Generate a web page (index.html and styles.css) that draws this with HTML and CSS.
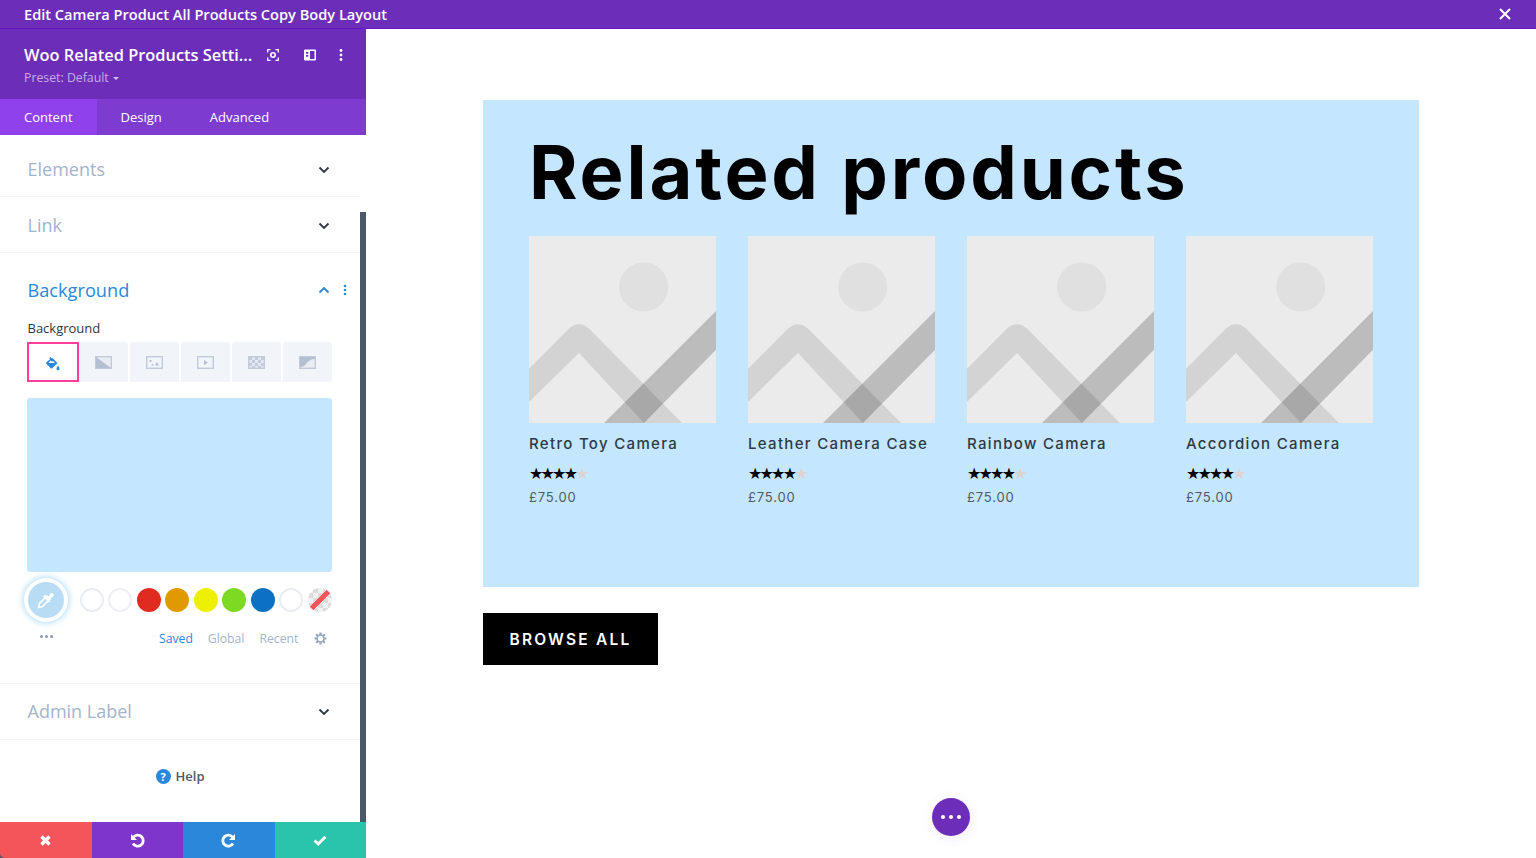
FILE: index.html
```html
<!DOCTYPE html>
<html lang="en">
<head>
<meta charset="utf-8">
<title>Edit Camera Product</title>
<link rel="stylesheet" href="styles.css">
</head>
<body>
<svg class="defs" width="0" height="0" aria-hidden="true">
  <symbol id="placeholder" viewBox="0 0 187 187">
    <rect width="187" height="187" fill="#ebebeb"/>
    <circle cx="114.7" cy="51" r="24.5" fill="#e0e0e0"/>
    <path d="M0 132.7 40 92.5Q50 84 60 92.5L153 187H115L50 117 0 166Z" fill="#000" fill-opacity=".1"/>
    <path d="M187 75V113.7L115 187H75Z" fill="#000" fill-opacity=".2"/>
  </symbol>
  <symbol id="chev" viewBox="0 0 12 8"><path d="M1.500 1.500 6 6l4.500-4.500" fill="none" stroke="currentColor" stroke-width="1.900"/></symbol>
</svg>
<header class="topbar">
  <span class="topbar-title">Edit Camera Product All Products Copy Body Layout</span>
  <svg class="close" width="12" height="12" viewBox="0 0 12 12"><path d="M1 1l10 10M11 1 1 11" stroke="#fff" stroke-width="2"/></svg>
</header>
<div class="main">
  <aside class="panel">
    <div class="panel-head">
      <div class="head-row">
        <h1 class="panel-title">Woo Related Products Setti...</h1>
        <svg class="head-ico focus" width="12" height="12" viewBox="0 0 12 12"><path d="M.7 3.500V.7h2.800M8.500.7h2.800v2.800M11.300 8.500v2.800H8.500M3.500 11.300H.7V8.500" fill="none" stroke="#fff" stroke-width="1.300"/><circle cx="6" cy="6" r="2.200" fill="none" stroke="#fff" stroke-width="1.600"/></svg>
        <svg class="head-ico split" width="12" height="12" viewBox="0 0 12 12"><path fill="#fff" fill-rule="evenodd" d="M1 .5h10a1 1 0 0 1 1 1v9a1 1 0 0 1-1 1H1a1 1 0 0 1-1-1v-9a1 1 0 0 1 1-1ZM6 2v8h4.500V2ZM2 3v1.700h2.300V3Zm0 3v1.700h2.300V6Z"/></svg>
        <svg class="head-ico dots" width="4" height="12" viewBox="0 0 4 12"><circle cx="2" cy="1.500" r="1.400" fill="#fff"/><circle cx="2" cy="6" r="1.400" fill="#fff"/><circle cx="2" cy="10.500" r="1.400" fill="#fff"/></svg>
      </div>
      <div class="preset">Preset: Default <span class="caret"></span></div>
    </div>
    <nav class="tabs">
      <span class="tab tab-active">Content</span>
      <span class="tab">Design</span>
      <span class="tab">Advanced</span>
    </nav>
    <div class="panel-body">
      <div class="scrollbar"></div>
      <div class="toggle"><span class="toggle-name">Elements</span><svg class="chev" width="12" height="8"><use href="#chev"/></svg></div>
      <div class="toggle"><span class="toggle-name">Link</span><svg class="chev" width="12" height="8"><use href="#chev"/></svg></div>
      <section class="open">
        <div class="open-head">
          <span class="open-name">Background</span>
          <svg class="chev-up" width="12" height="8"><use href="#chev"/></svg>
          <svg class="open-dots" width="4" height="12" viewBox="0 0 4 12"><circle cx="2" cy="2" r="1.300" fill="#2b87da"/><circle cx="2" cy="6" r="1.300" fill="#2b87da"/><circle cx="2" cy="10" r="1.300" fill="#2b87da"/></svg>
        </div>
        <div class="field-label">Background</div>
        <div class="bg-tabs">
          <span class="bg-tab bg-tab-active">
            <svg width="14" height="14" viewBox="0 0 14 14"><path fill="#2b87da" fill-rule="evenodd" d="M4.500 0 6 1.500l.8-.3 4.700 4.700-5 5a1.400 1.400 0 0 1-2 0L.6 7a1.400 1.400 0 0 1 0-2L4 2.300 3.300 1.200ZM5 3.300 2.300 6h6.600l-2-2.200-.9.900-.9-.9Z"/><path fill="#2b87da" d="M12 8.500c.8 1.300 1.500 2.200 1.500 3.200a1.500 1.500 0 0 1-3 0c0-1 .7-1.900 1.500-3.200Z"/></svg>
          </span>
          <span class="bg-tab"><svg width="17" height="13" viewBox="0 0 17 13"><rect x=".7" y=".7" width="15.600" height="11.600" fill="#e9edf3" stroke="#c3cbdb" stroke-width="1.400"/><path d="M1 1v11h15Z" fill="#b5bfd2"/></svg></span>
          <span class="bg-tab"><svg width="17" height="13" viewBox="0 0 17 13"><rect x=".7" y=".7" width="15.600" height="11.600" fill="none" stroke="#c3cbdb" stroke-width="1.400"/><path d="M3.500 4h2v2h-2ZM9 9.500l2-3.500 2 3.500ZM5 9.500l1.500-2 1.500 2Z" fill="#b5bfd2"/></svg></span>
          <span class="bg-tab"><svg width="17" height="13" viewBox="0 0 17 13"><rect x=".7" y=".7" width="15.600" height="11.600" fill="none" stroke="#c3cbdb" stroke-width="1.400"/><path d="M7 4l4 2.500L7 9Z" fill="#b5bfd2"/></svg></span>
          <span class="bg-tab"><svg width="17" height="13" viewBox="0 0 17 13"><rect x=".7" y=".7" width="15.600" height="11.600" fill="#e4e8f0" stroke="#c3cbdb" stroke-width="1.400"/><path d="M1 1h3v3H1ZM7 1h3v3H7ZM13 1h3v3h-3ZM4 4h3v3H4ZM10 4h3v3h-3ZM1 7h3v3H1ZM7 7h3v3H7ZM13 7h3v3h-3ZM4 10h3v2H4ZM10 10h3v2h-3Z" fill="#c3cbdb"/></svg></span>
          <span class="bg-tab"><svg width="17" height="13" viewBox="0 0 17 13"><rect x=".7" y=".7" width="15.600" height="11.600" fill="#e9edf3" stroke="#c3cbdb" stroke-width="1.400"/><path d="M1 1h15v2C12 3 9 5 7 8 5.500 10 3.500 11 1 11Z" fill="#b5bfd2"/></svg></span>
        </div>
        <div class="preview"></div>
        <div class="color-row">
          <span class="picker">
            <svg width="18" height="18" viewBox="0 0 18 18"><path d="M10 5 2.500 12.500 1.500 16.500 5.500 15.500 13 8Z" fill="none" stroke="#fff" stroke-width="1.600"/><path d="M9 4.500 11 6.500 13.500 2.500a2 2 0 0 1 3 2.500L12 9l1.500 1.500-1.500 1-6-6 1.500-1.500Z" fill="#fff"/></svg>
          </span>
          <div class="swatches">
            <span class="swatch swatch-white"></span>
            <span class="swatch swatch-white swatch-soft"></span>
            <span class="swatch swatch-red"></span>
            <span class="swatch swatch-orange"></span>
            <span class="swatch swatch-yellow"></span>
            <span class="swatch swatch-green"></span>
            <span class="swatch swatch-blue"></span>
            <span class="swatch swatch-white"></span>
            <span class="swatch swatch-none"></span>
          </div>
        </div>
        <div class="palette-row">
          <span class="more"><i></i><i></i><i></i></span>
          <span class="pal pal-on">Saved</span>
          <span class="pal">Global</span>
          <span class="pal">Recent</span>
          <svg class="gear" width="13" height="13" viewBox="0 0 24 24"><g stroke="#97a6bd" stroke-width="4"><path d="M12 1v5M12 18v5M1 12h5M18 12h5M4.200 4.200l3.500 3.500M16.300 16.300l3.500 3.500M19.800 4.200l-3.500 3.500M7.700 16.300l-3.500 3.500"/></g><circle cx="12" cy="12" r="6.500" fill="#fff" stroke="#97a6bd" stroke-width="3"/></svg>
        </div>
      </section>
      <div class="toggle toggle-last"><span class="toggle-name">Admin Label</span><svg class="chev" width="12" height="8"><use href="#chev"/></svg></div>
      <div class="help"><span class="help-ico">?</span><span class="help-text">Help</span></div>
    </div>
    <footer class="actions">
      <span class="act act-red"><svg width="13" height="13" viewBox="0 0 13 13"><path d="M2.500 2.500l8 8M10.500 2.500l-8 8" stroke="#fff" stroke-width="3.400"/></svg></span>
      <span class="act act-purple"><svg width="15" height="15" viewBox="0 0 15 15"><path d="M3.200 4.500A5.500 5.500 0 1 1 3 10.500" fill="none" stroke="#fff" stroke-width="2.800"/><path d="M1 1v6h6Z" fill="#fff"/></svg></span>
      <span class="act act-blue"><svg width="15" height="15" viewBox="0 0 15 15"><path d="M11.800 4.500A5.500 5.500 0 1 0 12 10.500" fill="none" stroke="#fff" stroke-width="2.800"/><path d="M14 1v6H8Z" fill="#fff"/></svg></span>
      <span class="act act-green"><svg width="14" height="11" viewBox="0 0 14 11"><path d="M1.500 5.500 5.200 9 12.500 1.800" fill="none" stroke="#fff" stroke-width="2.900"/></svg></span>
    </footer>
  </aside>
  <main class="canvas">
    <section class="related">
      <h2 class="related-title">Related products</h2>
      <div class="grid">
        <article class="card">
          <svg class="thumb" width="187" height="187"><use href="#placeholder"/></svg>
          <h3 class="card-name">Retro Toy Camera</h3>
          <div class="stars">★★★★<span class="star-off">★</span></div>
          <div class="price">£75.00</div>
        </article>
        <article class="card">
          <svg class="thumb" width="187" height="187"><use href="#placeholder"/></svg>
          <h3 class="card-name">Leather Camera Case</h3>
          <div class="stars">★★★★<span class="star-off">★</span></div>
          <div class="price">£75.00</div>
        </article>
        <article class="card">
          <svg class="thumb" width="187" height="187"><use href="#placeholder"/></svg>
          <h3 class="card-name">Rainbow Camera</h3>
          <div class="stars">★★★★<span class="star-off">★</span></div>
          <div class="price">£75.00</div>
        </article>
        <article class="card">
          <svg class="thumb" width="187" height="187"><use href="#placeholder"/></svg>
          <h3 class="card-name">Accordion Camera</h3>
          <div class="stars">★★★★<span class="star-off">★</span></div>
          <div class="price">£75.00</div>
        </article>
      </div>
    </section>
    <a class="browse">BROWSE ALL</a>
    <span class="fab"><i></i><i></i><i></i></span>
  </main>
</div>
</body>
</html>
```

FILE: styles.css
```css
* { box-sizing: border-box; }
html, body { margin: 0; height: 858px; overflow: hidden; }
body {
  display: flex;
  flex-direction: column;
  font-family: "Open Sans", "Liberation Sans", sans-serif;
  background: #fff;
}
.defs { position: absolute; }

.topbar {
  height: 29px;
  flex: none;
  display: flex;
  align-items: center;
  justify-content: space-between;
  padding: 0 25px 0 24px;
  background: #6c2eb9;
  border-bottom: 1px solid #6a14c4;
  color: #fff;
}
.topbar-title { font-size: 14.600px; font-weight: 600; }

.main { flex: 1; display: flex; min-height: 0; }

.panel { width: 366px; flex: none; display: flex; flex-direction: column; }
.panel-head { height: 70px; flex: none; padding: 15px 0 0 24px; background: #6c2eb9; color: #fff; }
.head-row { display: flex; align-items: center; height: 22px; }
.panel-title { margin: -2px 0 0; width: 243px; font-size: 16.400px; font-weight: 600; white-space: nowrap; }
.head-ico { flex: none; }
.split { margin-left: 25px; }
.dots { margin-left: 23px; }
.preset { margin-top: 4px; font-size: 12.300px; line-height: 16px; color: rgba(255, 255, 255, .62); }
.caret {
  display: inline-block;
  margin-left: 1px;
  vertical-align: 2px;
  border: 3px solid transparent;
  border-top: 3px solid rgba(255, 255, 255, .7);
  border-bottom: 0;
}

.tabs { height: 36px; flex: none; display: flex; background: #7e3bd0; color: #fff; }
.tab { padding: 0 24px; font-size: 13px; font-weight: 500; line-height: 36px; }
.tab-active { background: #8f42ec; }

.panel-body { position: relative; flex: 1; min-height: 0; padding-top: 6px; background: #fff; }
.scrollbar { position: absolute; right: 0; top: 77px; bottom: 0; width: 6px; background: #4c5866; }

.toggle {
  height: 56px;
  width: 360px;
  display: flex;
  align-items: center;
  justify-content: space-between;
  padding: 1px 30px 0 27.500px;
  border-bottom: 1px solid #f1f5f9;
}
.toggle-last { padding-top: 0; padding-bottom: 1px; }
.toggle-name { font-size: 18px; color: #a3b4cb; }
.chev { color: #2e3a47; margin-top: 1px; }

.open { width: 360px; height: 431px; padding: 0 28px 0 27.500px; border-bottom: 1px solid #f1f5f9; }
.open-head { height: 64px; padding-top: 9px; display: flex; align-items: center; }
.open-name { font-size: 18.200px; color: #2b87da; flex: 1; }
.chev-up { color: #2b87da; margin-right: -2px; transform: rotate(180deg); }
.open-dots { margin: 0 -15px 0 15px; }
.field-label { font-size: 13px; font-weight: 500; line-height: 20px; margin-top: 1px; color: #32373c; }
.bg-tabs { display: flex; gap: 2px; height: 40px; margin-top: 4px; margin-left: -.5px; width: 305px; }
.bg-tab {
  flex: 1;
  display: flex;
  align-items: center;
  justify-content: center;
  background: #f1f5f9;
  border-radius: 3px 3px 0 0;
}
.bg-tab-active {
  flex: none;
  width: 52px;
  margin-right: -2px;
  padding-top: 3px;
  background: #fff;
  border: 2px solid #ff3d9a;
  border-radius: 0;
}
.preview { width: 305px; height: 174px; margin-top: 16px; margin-left: -.5px; border-radius: 3px; background: #c4e6ff; }

.color-row { display: flex; align-items: center; width: 304px; height: 44px; margin-top: 6px; }
.picker {
  width: 36px;
  height: 36px;
  margin-left: .5px;
  flex: none;
  display: flex;
  align-items: center;
  justify-content: center;
  border-radius: 50%;
  background: #b9dcf5;
  box-shadow: 0 0 0 4px #fff, 0 0 6px 5px rgba(110, 190, 245, .55);
}
.swatches { flex: 1; display: flex; justify-content: space-between; margin-left: 16px; }
.swatch { width: 24px; height: 24px; border-radius: 50%; }
.swatch-white { background: #fff; border: 2px solid #e9ecf1; }
.swatch-soft { border-color: #eef0f3; }
.swatch-red { background: #e02b20; }
.swatch-orange { background: #e09900; }
.swatch-yellow { background: #edf000; }
.swatch-green { background: #7cda24; }
.swatch-blue { background: #0c71c3; }
.swatch-none {
  background:
    linear-gradient(135deg, transparent 43%, #f4555a 43%, #f4555a 57%, transparent 57%),
    repeating-conic-gradient(#dcdcdc 0 25%, #f2f2f2 0 50%) 0 0 / 10px 10px;
}

.palette-row { display: flex; align-items: center; height: 18px; margin-top: 7px; width: 305px; }
.more { display: flex; gap: 2px; width: 131.500px; padding: 0 0 4px 12px; }
.more i { width: 3px; height: 3px; border-radius: 50%; background: #8a9ab3; }
.pal { font-size: 12.200px; font-weight: 500; color: #a3b4cb; margin-right: 15px; }
.pal-on { color: #2b87da; }
.gear { margin-left: 1px; }

.help { display: flex; align-items: center; justify-content: center; gap: 5px; width: 360px; height: 72px; }
.help-ico {
  width: 15px;
  height: 15px;
  border-radius: 50%;
  background: #2b87da;
  color: #fff;
  font-size: 11px;
  font-weight: 700;
  line-height: 15px;
  text-align: center;
}
.help-text { font-size: 13px; font-weight: 600; color: #4c5866; }

.actions { height: 36px; flex: none; display: flex; background: #4c5866; }
.act { flex: 1; display: flex; align-items: center; justify-content: center; }
.act-red { background: #f4555a; border-bottom-left-radius: 5px; }
.act-purple { background: #7e35cc; }
.act-blue { background: #2b87da; }
.act-green { background: #29c4a9; }

.canvas { position: relative; flex: 1; padding: 71px 0 0 117px; background: #fff; }
.related { width: 936px; height: 487px; padding: 0 46px; background: #c4e6ff; }
.related-title {
  margin: 0;
  height: 136px;
  padding-top: 32px;
  font-family: Inter, "Liberation Sans", sans-serif;
  font-size: 74px;
  font-weight: 700;
  letter-spacing: 2.850px;
  line-height: 80px;
  color: #000;
  white-space: nowrap;
}
.grid { display: grid; grid-template-columns: repeat(4, 187px); gap: 32px; }
.card { min-width: 0; }
.thumb { display: block; }
.card-name {
  margin: 11px 0 0;
  font-family: Inter, "Liberation Sans", sans-serif;
  font-size: 15px;
  font-weight: 500;
  letter-spacing: 1.320px;
  line-height: 19px;
  color: #2c3a45;
  white-space: nowrap;
}
.stars {
  margin-top: 12px;
  height: 18px;
  font-family: "DejaVu Sans", sans-serif;
  font-size: 16px;
  letter-spacing: -2.800px;
  line-height: 18px;
  color: #000;
}
.star-off { color: #ddd3d0; }
.price {
  margin-top: 5px;
  font-family: Inter, "Liberation Sans", sans-serif;
  font-size: 13px;
  letter-spacing: .85px;
  line-height: 18px;
  color: #4f5a66;
}
.browse {
  display: flex;
  align-items: center;
  justify-content: center;
  width: 175px;
  height: 52px;
  margin-top: 26px;
  background: #000;
  color: #fff;
  font-family: Inter, "Liberation Sans", sans-serif;
  font-size: 15.500px;
  font-weight: 600;
  letter-spacing: 2.200px;
}
.fab {
  position: absolute;
  left: 566px;
  top: 769px;
  width: 38px;
  height: 38px;
  display: flex;
  align-items: center;
  justify-content: center;
  gap: 4px;
  border-radius: 50%;
  background: #6c2eb9;
  box-shadow: 0 2px 12px rgba(108, 46, 185, .12);
}
.fab i { width: 4px; height: 4px; border-radius: 50%; background: #fff; }
```
